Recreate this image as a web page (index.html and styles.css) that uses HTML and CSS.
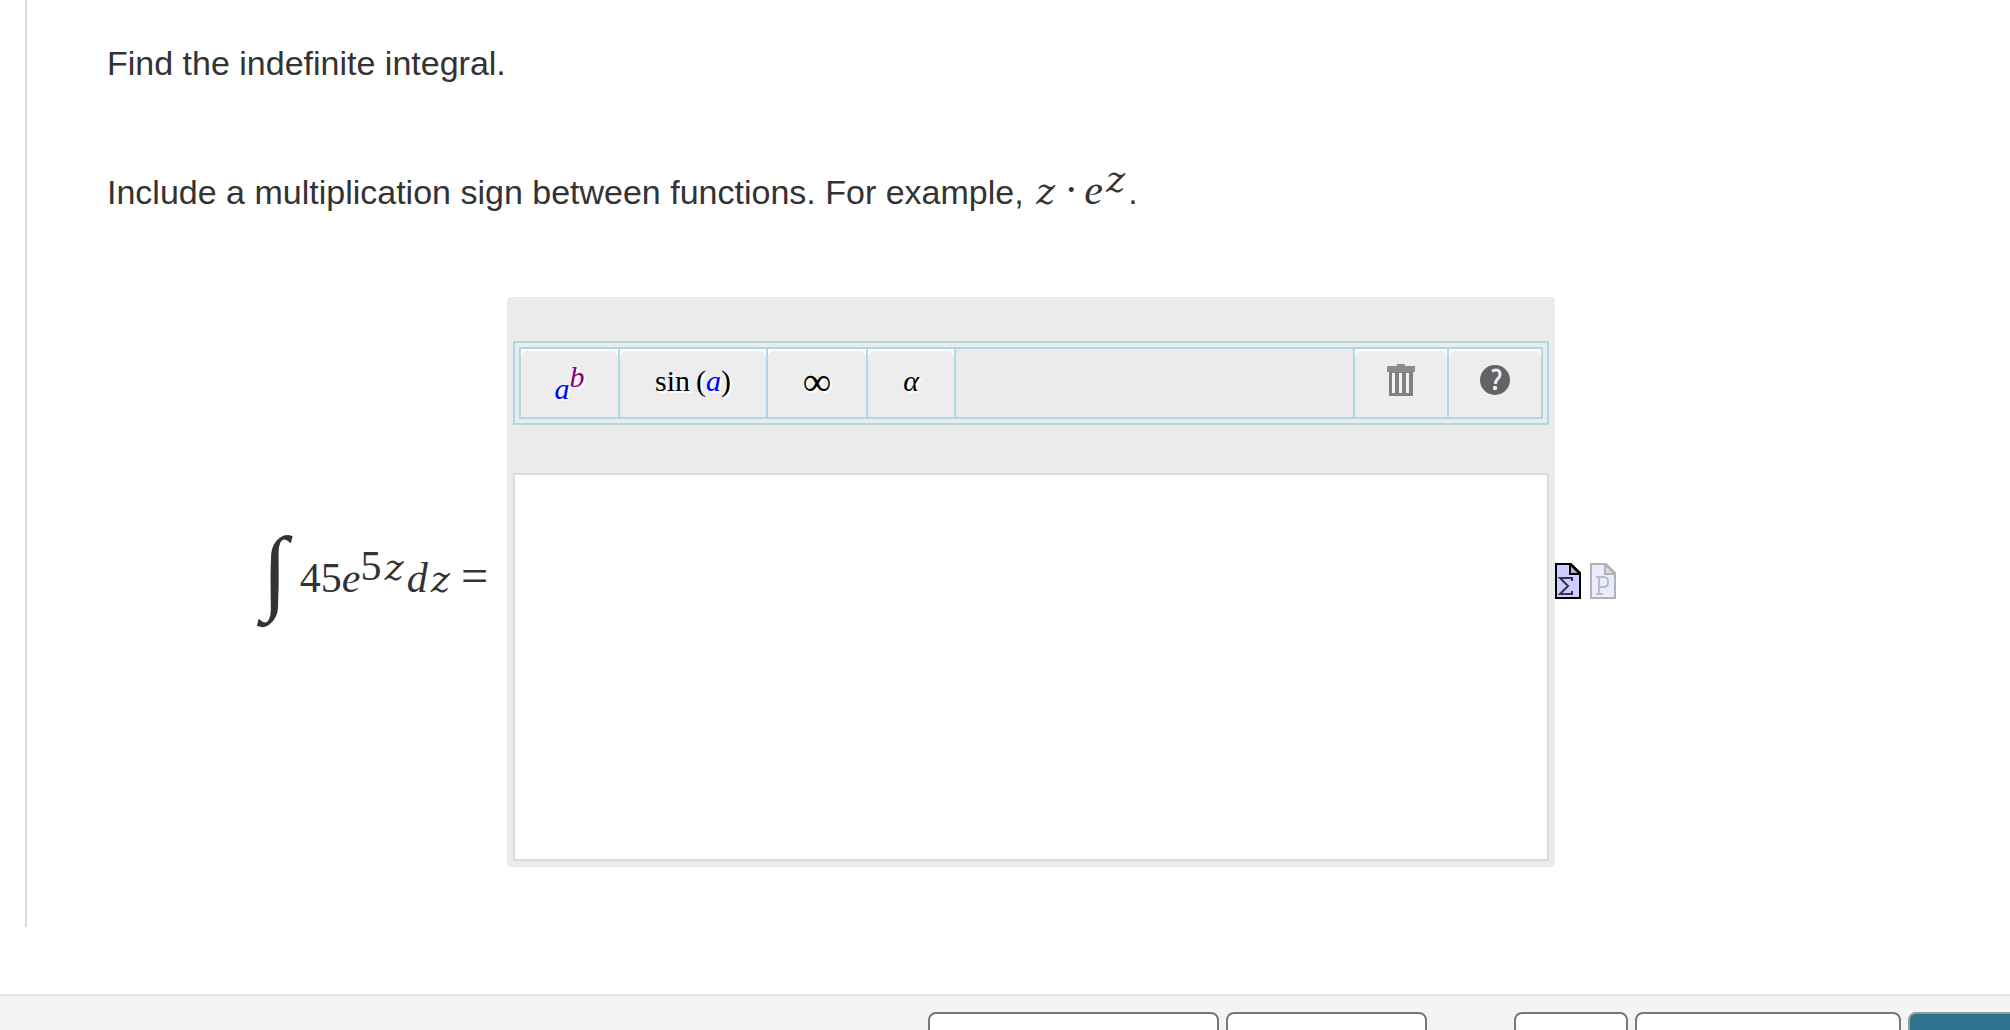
FILE: index.html
```html
<!DOCTYPE html>
<html lang="en">
<head>
<meta charset="utf-8">
<title>Indefinite integral</title>
<link rel="stylesheet" href="styles.css">
</head>
<body>
<main class="question">
  <p class="prompt">Find the indefinite integral.</p>
  <p class="prompt hint">Include a multiplication sign between functions. For example, <span class="inline-math"><math><mi>z</mi></math><span class="dot">·</span><i>e</i><sup><math><mi>z</mi></math></sup></span>.</p>
  <div class="answer">
    <div class="integral">
      <i class="int">∫</i>
      <span class="body">45<i>e</i><sup>5<math><mi>z</mi></math></sup><i>d</i><math><mi>z</mi></math><span class="equals">=</span></span>
    </div>
    <section class="editor">
      <div class="toolbar">
        <div class="tools">
          <button class="tool power" type="button"><span><i class="base">a</i><sup class="exp"><i>b</i></sup></span></button>
          <button class="tool sine" type="button"><span>sin</span><span>(<i class="base">a</i>)</span></button>
          <button class="tool infinity" type="button"><span>∞</span></button>
          <button class="tool alpha" type="button"><i>α</i></button>
          <div class="spacer"></div>
          <button class="tool action" type="button" aria-label="Clear">
            <svg width="28" height="32" viewBox="0 0 28 32"><path d="M10 0h8v2h10v6H0V2h10z" fill="#8b8c8e"/><path d="M2 8h24v24H2z" fill="#808184"/><path d="M5 9h3v20H5zM12 9h3v20h-3zM19 9h3v20h-3z" fill="#f2f2f2"/></svg>
          </button>
          <button class="tool action" type="button" aria-label="Help">
            <svg width="30" height="32" viewBox="0 0 30 32"><circle cx="15" cy="16" r="15" fill="#626366"/><path d="M12 7Q20 4 20 10.500Q20 13 17.500 15Q15.500 17 15.500 20" fill="none" stroke="#ececec" stroke-width="3"/><circle cx="15" cy="24" r="2.200" fill="#ececec"/></svg>
          </button>
        </div>
      </div>
      <textarea class="entry" aria-label="Answer"></textarea>
    </section>
    <div class="modes">
      <button class="mode" type="button" aria-label="Equation editor">
        <svg width="26" height="36" viewBox="0 0 26 36"><path d="M1 1h15l9 9v25H1z" fill="#ccf" stroke="#000" stroke-width="2"/><path d="M15 1v10h10z" fill="#b4b4d0" stroke="#000" stroke-width="2"/><path d="M17 18v-3H5l8 8-8 8h12v-3" fill="none" stroke="#334" stroke-width="2"/></svg>
      </button>
      <button class="mode" type="button" aria-label="Plain text">
        <svg width="26" height="36" viewBox="0 0 26 36"><path d="M1 1h15l9 9v25H1z" fill="#ebebff" stroke="#b2b2b2" stroke-width="2"/><path d="M15 1v10h10z" fill="#ddd" stroke="#b2b2b2" stroke-width="2"/><path d="M6 14h8q4 0 4 5t-4 5H9M9 14v17M6 31h7" fill="none" stroke="#bbbbc4" stroke-width="2"/></svg>
      </button>
    </div>
  </div>
</main>
<footer class="actions">
  <button class="act wide" type="button" aria-label="Example"></button>
  <button class="act medium" type="button" aria-label="Media"></button>
  <button class="act small" type="button" aria-label="Clear all"></button>
  <button class="act large" type="button" aria-label="Check answer"></button>
  <button class="act primary" type="button" aria-label="Continue"></button>
</footer>
</body>
</html>
```
FILE: styles.css
```css
* { box-sizing: border-box; }

body {
  margin: 0;
  min-height: 100vh;
  display: flex;
  flex-direction: column;
  justify-content: space-between;
  overflow: hidden;
  background: #fff;
  color: #333;
  font-family: "Liberation Sans", Arial, sans-serif;
}

button { margin: 0; padding: 0; font: inherit; cursor: pointer; }
svg { display: block; }
math { font-family: "DejaVu Math TeX Gyre", serif; font-size: 36px; }
math, sup { line-height: 0; }
sup { font-size: inherit; vertical-align: 12px; }

.question {
  margin-left: 25px;
  padding: 43px 0 60px 80px;
  border-left: 2px solid #dadada;
}

.prompt {
  margin: 0;
  height: 40px;
  font-size: 34px;
  line-height: 40px;
  white-space: nowrap;
}
.hint { margin-top: 89px; }
.inline-math {
  font-family: "Liberation Serif", "Times New Roman", serif;
  font-size: 42px;
  line-height: 0;
}
.dot { padding: 0 6px; }

.answer {
  display: flex;
  align-items: center;
  margin-top: 85px;
  padding: 0 394px 0 151px;
}

.integral {
  display: flex;
  flex: none;
  align-items: center;
  gap: 12px;
  width: 249px;
  padding-left: 4px;
  font-family: "Liberation Serif", "Times New Roman", serif;
  font-size: 42px;
  line-height: 42px;
  white-space: nowrap;
}
.int { margin-bottom: 24px; font-size: 94px; line-height: 94px; }
.body { padding-bottom: 8px; }
.equals { margin-left: 8px; font-size: 48px; line-height: 0; }

.editor {
  flex: 1;
  padding: 44px 6px 6px;
  border-radius: 4px;
  background: #ebebeb;
}

.toolbar {
  padding: 4px;
  border: 2px solid #add8e6;
}
.tools {
  display: flex;
  height: 72px;
  border: 2px solid #add8e6;
}
.tool {
  display: flex;
  justify-content: center;
  align-items: center;
  gap: 6px;
  padding-bottom: 4px;
  border: 0;
  border-right: 2px solid #add8e6;
  background: radial-gradient(circle at 8px 10px, #ededed 8px, #fff 9px) 0 0 / 8px 10px no-repeat,
    radial-gradient(circle at 0 10px, #ededed 8px, #fff 9px) 100% 0 / 8px 10px no-repeat,
    #ededed;
  box-shadow: inset 0 2px 0 #fff;
  color: #000;
  font-family: "Liberation Serif", "Times New Roman", serif;
  font-size: 30px;
  text-shadow: 2px 2px 0 #fff;
}
.tool:last-child { border-right: 0; }
.base { color: #00f; }
.exp { color: #808; }
.power { width: 99px; padding: 12px 0 0; }
.sine { width: 148px; }
.infinity { width: 100px; font-size: 40px; }
.alpha { width: 88px; }
.spacer { flex: 1; border-right: 2px solid #add8e6; }
.action { width: 94px; padding-bottom: 6px; }
.action:last-child { width: 92px; }

.entry {
  display: block;
  width: 100%;
  height: 388px;
  margin-top: 48px;
  border: 2px solid #dcdcdc;
  background: #fff;
  resize: none;
  outline: 0;
}

.modes { display: flex; gap: 9px; flex: none; padding-bottom: 2px; }
.mode { border: 0; background: none; }

.actions {
  display: flex;
  justify-content: flex-end;
  gap: 7px;
  height: 36px;
  padding-top: 16px;
  border-top: 2px solid #e4e4e4;
  background: #f4f4f4;
  overflow: hidden;
}
.act {
  flex: none;
  height: 56px;
  border: 2px solid #777;
  border-radius: 8px;
  background: #fff;
}
.wide { width: 291px; }
.medium { width: 201px; margin-right: 80px; }
.small { width: 114px; }
.large { width: 266px; }
.primary {
  width: 200px;
  margin-right: -98px;
  border-color: #999;
  background: #2e7291;
}
```
